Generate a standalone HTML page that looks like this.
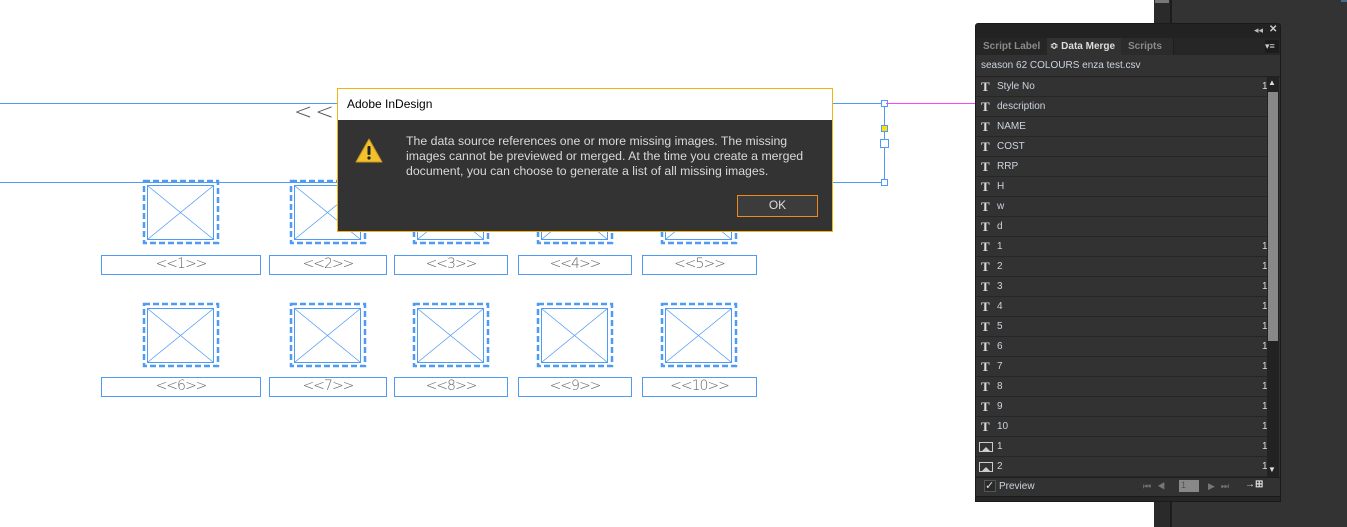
<!DOCTYPE html>
<html><head><meta charset="utf-8"><style>
*{margin:0;padding:0;box-sizing:border-box}
body{width:1347px;height:527px;background:#fff;position:relative;overflow:hidden;font-family:"Liberation Sans",sans-serif}
.a{position:absolute}
.lbl{position:absolute;border:1.5px solid #4f9af5;height:20px;color:#666;font-size:14px;text-align:center;line-height:17px;font-family:"DejaVu Sans","Liberation Sans",sans-serif;font-weight:300;letter-spacing:-1px}
.row{position:absolute;left:0;width:291px;height:20px;border-bottom:1px solid #262626;color:#ccd4e0;font-size:10px;line-height:19px}
.row .t{position:absolute;left:5px;top:0;font-family:"Liberation Serif",serif;font-weight:bold;font-size:13px;color:#ddd}
.row .n{position:absolute;left:21px}
.row .o{position:absolute;left:286px;color:#ddd}
.img{position:absolute;left:3px;top:5px;width:14px;height:10px;border:1px solid #ccc;background:#333;overflow:hidden}
.img:after{content:"";position:absolute;left:2px;top:4px;border-left:4px solid transparent;border-right:4px solid transparent;border-bottom:4px solid #ccc}
</style></head><body>
<div class="a" style="left:1154px;top:0;width:16px;height:527px;background:#2a2a2a"></div>
<div class="a" style="left:1155px;top:0;width:14px;height:3px;background:#777"></div>
<div class="a" style="left:1170px;top:0;width:2px;height:527px;background:#1c1c1c"></div>
<div class="a" style="left:1172px;top:0;width:175px;height:527px;background:#333"></div>
<div class="a" style="left:1341px;top:0;width:6px;height:2px;background:#4a6a8a"></div>

<div class="a" style="left:0;top:103px;width:884px;height:1px;background:#4f9af5"></div>
<div class="a" style="left:0;top:182px;width:885px;height:1px;background:#4f9af5"></div>
<div class="a" style="left:884px;top:103px;width:1px;height:80px;background:#4f9af5"></div>
<div class="a" style="left:886px;top:103px;width:89px;height:1px;background:#ff40ff;z-index:5"></div>
<div class="a" style="left:881px;top:100px;width:7px;height:7px;border:1px solid #4f9af5;background:#fff"></div>
<div class="a" style="left:881px;top:125px;width:7px;height:7px;border:1px solid #4f9af5;background:#ffe000"></div>
<div class="a" style="left:880px;top:139px;width:9px;height:9px;border:1px solid #4f9af5;background:#fff"></div>
<div class="a" style="left:881px;top:179px;width:7px;height:7px;border:1px solid #4f9af5;background:#fff"></div>
<div class="a" style="left:294px;top:100px;font-size:22px;color:#555;font-family:'DejaVu Sans',sans-serif;font-weight:300;letter-spacing:-2px">&lt; &lt; S</div>

<svg class="a" style="left:0;top:0" width="970" height="527">
<g fill="none" stroke="#4f9af5">
<g id="f"><rect x="144" y="181" width="74" height="62" stroke-width="2.5" stroke-dasharray="6,3"/><rect x="147.5" y="185.5" width="66" height="54" stroke-width="1"/><path d="M148 186L213 239M213 186L148 239" stroke-width="0.8"/></g>
<use href="#f" x="147"/><use href="#f" x="270"/><use href="#f" x="394"/><use href="#f" x="518"/>
<use href="#f" y="123"/><use href="#f" x="147" y="123"/><use href="#f" x="270" y="123"/><use href="#f" x="394" y="123"/><use href="#f" x="518" y="123"/>
</g></svg>

<div class="lbl" style="left:101px;top:255px;width:160px">&lt;&lt;1&gt;&gt;</div>
<div class="lbl" style="left:269px;top:255px;width:118px">&lt;&lt;2&gt;&gt;</div>
<div class="lbl" style="left:394px;top:255px;width:114px">&lt;&lt;3&gt;&gt;</div>
<div class="lbl" style="left:518px;top:255px;width:114px">&lt;&lt;4&gt;&gt;</div>
<div class="lbl" style="left:642px;top:255px;width:115px">&lt;&lt;5&gt;&gt;</div>
<div class="lbl" style="left:101px;top:377px;width:160px">&lt;&lt;6&gt;&gt;</div>
<div class="lbl" style="left:269px;top:377px;width:118px">&lt;&lt;7&gt;&gt;</div>
<div class="lbl" style="left:394px;top:377px;width:114px">&lt;&lt;8&gt;&gt;</div>
<div class="lbl" style="left:518px;top:377px;width:114px">&lt;&lt;9&gt;&gt;</div>
<div class="lbl" style="left:642px;top:377px;width:115px">&lt;&lt;10&gt;&gt;</div>

<div class="a" style="left:337px;top:88px;width:496px;height:144px;border:1px solid #f3b311;background:#333">
 <div style="height:31px;background:#fff;font-size:12px;color:#000;padding:8px 0 0 9px">Adobe InDesign</div>
 <svg class="a" style="left:17px;top:49px" width="28" height="25"><path d="M14 1L27 24H1Z" fill="#f2c12e" stroke="#c9951a" stroke-width="1" stroke-linejoin="round"/><rect x="12.5" y="8" width="3" height="9" rx="1" fill="#222"/><circle cx="14" cy="20" r="1.6" fill="#222"/></svg>
 <div class="a" style="left:68px;top:45px;white-space:nowrap;font-size:12.3px;line-height:15px;color:#d9d9d9">The data source references one or more missing images. The missing<br>images cannot be previewed or merged. At the time you create a merged<br>document, you can choose to generate a list of all missing images.</div>
 <div class="a" style="left:399px;top:106px;width:81px;height:22px;border:1px solid #f08a1c;background:#3c3c3c;color:#ddd;font-size:12px;text-align:center;line-height:19px">OK</div>
</div>

<div class="a" style="left:975px;top:23px;width:306px;height:479px;background:#323232;border:1px solid #1a1a1a;border-radius:3px 3px 0 0;overflow:hidden">
 <div class="a" style="left:0;top:0;width:306px;height:14px;background:#222"></div>
 <div class="a" style="left:278px;top:1px;color:#bbb;font-size:9px">◂◂</div>
 <div class="a" style="left:293px;top:0px;color:#ccc;font-size:10px;font-weight:bold">✕</div>
 <div class="a" style="left:0;top:14px;width:306px;height:17px;background:#262626"></div>
 <div class="a" style="left:3px;top:14px;width:68px;height:17px;color:#8a8a8a;font-size:10px;line-height:17px;font-weight:bold;padding-left:4px">Script Label</div>
 <div class="a" style="left:71px;top:14px;width:74px;height:17px;background:#323232;color:#ddd;font-size:10px;line-height:17px;font-weight:bold;padding-left:3px">≎ Data Merge</div>
 <div class="a" style="left:145px;top:14px;width:53px;height:17px;background:#2b2b2b;border-right:1px solid #1e1e1e;color:#8a8a8a;font-size:10px;line-height:17px;font-weight:bold;padding-left:7px">Scripts</div>
 <div class="a" style="left:289px;top:16px;width:14px;height:13px;background:#1c1c1c;color:#ccc;font-size:9px;line-height:13px">▾≡</div>
 <div class="a" style="left:0;top:31px;width:306px;height:22px;border-bottom:1px solid #222;color:#ccd4e0;font-size:10px;line-height:22px;padding-left:5px">season 62 COLOURS enza test.csv</div>
 <div class="a" style="left:0;top:53px;width:291px;height:400px">
  <div class="row" style="top:0"><span class="t">T</span><span class="n">Style No</span><span class="o">1</span></div>
  <div class="row" style="top:20px"><span class="t">T</span><span class="n">description</span></div>
  <div class="row" style="top:40px"><span class="t">T</span><span class="n">NAME</span></div>
  <div class="row" style="top:60px"><span class="t">T</span><span class="n">COST</span></div>
  <div class="row" style="top:80px"><span class="t">T</span><span class="n">RRP</span></div>
  <div class="row" style="top:100px"><span class="t">T</span><span class="n">H</span></div>
  <div class="row" style="top:120px"><span class="t">T</span><span class="n">w</span></div>
  <div class="row" style="top:140px"><span class="t">T</span><span class="n">d</span></div>
  <div class="row" style="top:160px"><span class="t">T</span><span class="n">1</span><span class="o">1</span></div>
  <div class="row" style="top:180px"><span class="t">T</span><span class="n">2</span><span class="o">1</span></div>
  <div class="row" style="top:200px"><span class="t">T</span><span class="n">3</span><span class="o">1</span></div>
  <div class="row" style="top:220px"><span class="t">T</span><span class="n">4</span><span class="o">1</span></div>
  <div class="row" style="top:240px"><span class="t">T</span><span class="n">5</span><span class="o">1</span></div>
  <div class="row" style="top:260px"><span class="t">T</span><span class="n">6</span><span class="o">1</span></div>
  <div class="row" style="top:280px"><span class="t">T</span><span class="n">7</span><span class="o">1</span></div>
  <div class="row" style="top:300px"><span class="t">T</span><span class="n">8</span><span class="o">1</span></div>
  <div class="row" style="top:320px"><span class="t">T</span><span class="n">9</span><span class="o">1</span></div>
  <div class="row" style="top:340px"><span class="t">T</span><span class="n">10</span><span class="o">1</span></div>
  <div class="row" style="top:360px"><span class="img"></span><span class="n">1</span><span class="o">1</span></div>
  <div class="row" style="top:380px"><span class="img"></span><span class="n">2</span><span class="o">1</span></div>
 </div>
 <div class="a" style="left:291px;top:53px;width:12px;height:400px;background:#222"></div>
 <div class="a" style="left:292px;top:54px;color:#ddd;font-size:8px">▲</div>
 <div class="a" style="left:292px;top:68px;width:10px;height:249px;background:#888"></div>
 <div class="a" style="left:292px;top:441px;color:#ddd;font-size:8px">▼</div>
 <div class="a" style="left:0;top:453px;width:306px;height:19px;border-top:1px solid #1e1e1e;background:#323232"></div>
 <div class="a" style="left:8px;top:456px;width:12px;height:12px;border:1px solid #555;background:#2a2a2a;color:#ddd;font-size:11px;line-height:10px">✓</div>
 <div class="a" style="left:23px;top:457px;color:#ccd4e0;font-size:10px">Preview</div>
 <div class="a" style="left:167px;top:457px;color:#777;font-size:9px;letter-spacing:6px">⏮◀</div>
 <div class="a" style="left:203px;top:456px;width:20px;height:12px;background:#888;color:#555;font-size:9px;padding-left:2px">1</div>
 <div class="a" style="left:232px;top:457px;color:#777;font-size:9px;letter-spacing:6px">▶⏭</div>
 <div class="a" style="left:269px;top:455px;color:#ddd;font-size:10px;font-weight:bold">→⊞</div>
 <div class="a" style="left:0;top:472px;width:306px;height:7px;background:#262626;border-top:1px solid #1a1a1a"></div>
</div>
</body></html>
